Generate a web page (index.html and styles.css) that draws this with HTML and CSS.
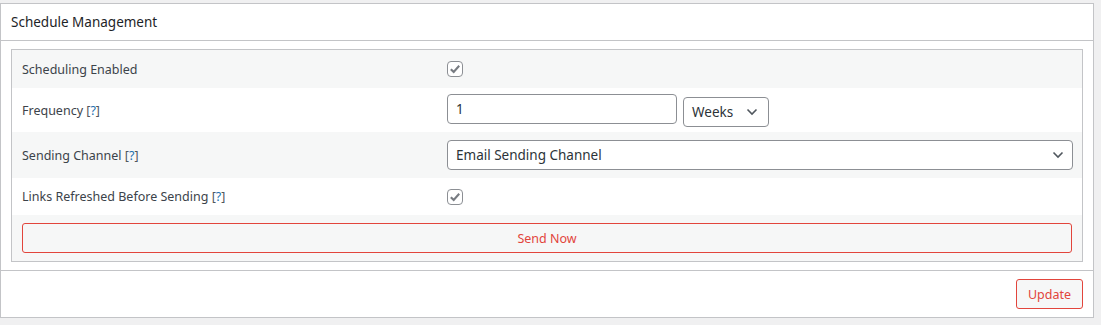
FILE: index.html
```html
<!DOCTYPE html>
<html>
<head>
<meta charset="utf-8">
<link rel="stylesheet" href="styles.css">
</head>
<body>
<div class="postbox">
  <div class="postbox-header">Schedule Management</div>
  <div class="inside">
    <div class="table">
      <div class="row alt">
        <div class="label">Scheduling Enabled</div>
        <div class="field"><span class="cb"><svg viewBox="0 0 16 16" width="16" height="16"><path d="M3.2 8.2 L6.5 11.3 L12.8 4.3" fill="none" stroke="#787c82" stroke-width="2.4"/></svg></span></div>
      </div>
      <div class="row">
        <div class="label">Frequency <span class="help">[<a>?</a>]</span></div>
        <div class="field">
          <div class="input num">1</div>
          <div class="select weeks">Weeks<svg class="chev" viewBox="0 0 12 8" width="12" height="8"><path d="M1.5 1.5 L6 6 L10.5 1.5" fill="none" stroke="#50575e" stroke-width="1.6"/></svg></div>
        </div>
      </div>
      <div class="row alt tall">
        <div class="label">Sending Channel <span class="help">[<a>?</a>]</span></div>
        <div class="field">
          <div class="select wide">Email Sending Channel<svg class="chev" viewBox="0 0 12 8" width="12" height="8"><path d="M1.5 1.5 L6 6 L10.5 1.5" fill="none" stroke="#50575e" stroke-width="1.6"/></svg></div>
        </div>
      </div>
      <div class="row">
        <div class="label">Links Refreshed Before Sending <span class="help">[<a>?</a>]</span></div>
        <div class="field"><span class="cb"><svg viewBox="0 0 16 16" width="16" height="16"><path d="M3.2 8.2 L6.5 11.3 L12.8 4.3" fill="none" stroke="#787c82" stroke-width="2.4"/></svg></span></div>
      </div>
      <div class="row alt btnrow">
        <div class="sendnow">Send Now</div>
      </div>
    </div>
  </div>
  <div class="footer"><div class="update">Update</div></div>
</div>
</body>
</html>
```
FILE: styles.css
```css
html, body { margin: 0; padding: 0; }
body {
  background: #f0f0f1;
  font-family: "Noto Sans", "Open Sans", sans-serif;
  font-size: 12.5px;
  color: #3c434a;
  width: 1101px;
  height: 325px;
  overflow: hidden;
}
.postbox {
  margin-top: 3px;
  width: 1094px;
  background: #fff;
  border: 1px solid #c3c4c7;
  box-sizing: border-box;
}
.postbox-header {
  height: 37px;
  box-sizing: border-box;
  border-bottom: 1px solid #c3c4c7;
  padding: 0 10px;
  display: flex;
  align-items: center;
  font-size: 13.5px;
  color: #1d2327;
}
.inside {
  padding: 8px 10px;
}
.table {
  border: 1px solid #c3c4c7;
  background: #f6f7f7;
}
.row {
  display: flex;
  align-items: center;
  height: 38px;
  background: #fff;
}
.row.alt { background: #f6f7f7; }
.row:nth-child(2) { height: 44px; }
.row.tall { height: 46px; }
.row:nth-child(4) { height: 37px; }
.label {
  width: 424px;
  padding-left: 10px;
  flex: none;
}
.help { color: #50575e; }
.help a { color: #2271b1; }
.field {
  display: flex;
  align-items: center;
  gap: 6px;
  flex: 1;
  padding-right: 10px;
}
.cb {
  width: 16px;
  height: 16px;
  box-sizing: border-box;
  border: 1px solid #8c8f94;
  border-radius: 4px;
  background: #fff;
  display: flex;
  align-items: center;
  justify-content: center;
  margin-left: 1px;
}
.cb svg { width: 14px; height: 14px; flex: none; }
.input, .select {
  height: 30px;
  box-sizing: border-box;
  border: 1px solid #8c8f94;
  border-radius: 4px;
  background: #fff;
  display: flex;
  align-items: center;
  padding: 0 8px;
  font-size: 13.5px;
  color: #2c3338;
}
.num { width: 230px; margin-left: 1px; margin-top: -3px; }
.weeks { width: 86px; justify-content: space-between; margin-top: 3px; padding-right: 10px; }
.wide { width: 626px; margin-left: 1px; justify-content: space-between; padding-right: 8px; }
.btnrow { height: 46px; padding: 0 10px; }
.sendnow {
  flex: 1;
  height: 30px;
  box-sizing: border-box;
  border: 1px solid #e2453c;
  border-radius: 3px;
  color: #e2453c;
  background: #f6f7f7;
  display: flex;
  align-items: center;
  justify-content: center;
}
.footer {
  border-top: 1px solid #c3c4c7;
  height: 47px;
  box-sizing: border-box;
  display: flex;
  align-items: center;
  justify-content: flex-end;
  padding-right: 10px;
}
.update {
  height: 30px;
  box-sizing: border-box;
  border: 1px solid #e2453c;
  border-radius: 3px;
  color: #e2453c;
  background: #f6f7f7;
  padding: 0 11px;
  display: flex;
  align-items: center;
}
```
